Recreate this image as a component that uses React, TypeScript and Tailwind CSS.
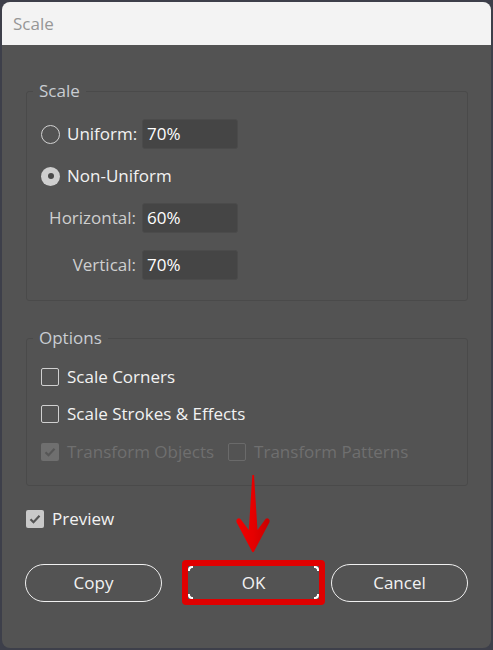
import React from 'react';

const font = { fontFamily: '"Open Sans", "Noto Sans", Arial, sans-serif' };

function Radio({ checked }: { checked?: boolean }) {
  if (checked) {
    return (
      <span className="flex h-[19px] w-[19px] shrink-0 items-center justify-center rounded-full bg-[#cfcfcf]">
        <span className="h-[6px] w-[6px] rounded-full bg-[#4a4a4a]" />
      </span>
    );
  }
  return <span className="h-[19px] w-[19px] shrink-0 rounded-full border-[1.5px] border-[#d2d2d2]" />;
}

function Check({ checked, disabled }: { checked?: boolean; disabled?: boolean }) {
  if (checked) {
    return (
      <span
        className={
          'flex h-[18px] w-[18px] shrink-0 items-center justify-center rounded-[2px] ' +
          (disabled ? 'bg-[#6f6f6f]' : 'bg-[#c9c9c9]')
        }
      >
        <svg width="12" height="10" viewBox="0 0 12 10">
          <path
            d="M1.5 5.2 L4.5 8.2 L10.5 1.8"
            fill="none"
            stroke={disabled ? '#575757' : '#555555'}
            strokeWidth="2.2"
          />
        </svg>
      </span>
    );
  }
  return (
    <span
      className={
        'block h-[18px] w-[18px] shrink-0 rounded-[2px] border-[1.5px] ' +
        (disabled ? 'border-[#6a6a6a]' : 'border-[#d0d0d0]')
      }
    />
  );
}

function Field({ value }: { value: string }) {
  return (
    <div className="flex h-[30px] w-[96px] items-center rounded-[3px] border border-[#4b4b4b] bg-[#454545] px-[4px] text-[17px] text-white">
      {value}
    </div>
  );
}

export default function App() {
  return (
    <div className="h-[650px] w-[493px] bg-[#3d3f4a] p-[2px]" style={font}>
      <div className="relative flex h-[646px] flex-col overflow-hidden rounded-[8px] bg-[#535353]">
        <div className="flex h-[43px] shrink-0 items-center bg-[#f3f3f3] px-[11px] text-[17px] text-[#969696]">
          Scale
        </div>

        <div className="flex flex-col px-[24px] pr-[23px] pt-[35px]">
          <fieldset className="rounded-[3px] border border-[#4a4a4a] px-[14px] pb-[20px]">
            <legend className="ml-[-8px] px-[6px] text-[17px] leading-[22px] text-[#c9cdd2]">Scale</legend>
            <div className="mt-[17px] flex items-center gap-[6px]">
              <div className="flex w-[95px] items-center gap-[7px]">
                <Radio />
                <span className="text-[17px] text-[#f2f2f2]">Uniform:</span>
              </div>
              <Field value="70%" />
            </div>
            <div className="mt-[12px] flex h-[30px] items-center gap-[7px]">
              <Radio checked />
              <span className="text-[17px] text-[#f2f2f2]">Non-Uniform</span>
            </div>
            <div className="mt-[12px] flex items-center gap-[6px]">
              <span className="w-[95px] text-right text-[17px] text-[#cfcfcf]">Horizontal:</span>
              <Field value="60%" />
            </div>
            <div className="mt-[17px] flex items-center gap-[6px]">
              <span className="w-[95px] text-right text-[17px] text-[#cfcfcf]">Vertical:</span>
              <Field value="70%" />
            </div>
          </fieldset>

          <fieldset className="mt-[26px] rounded-[3px] border border-[#4a4a4a] px-[14px] pb-[22px]">
            <legend className="ml-[-8px] px-[6px] text-[17px] leading-[22px] text-[#c9cdd2]">Options</legend>
            <div className="mt-[17px] flex h-[22px] items-center gap-[8px]">
              <Check />
              <span className="text-[17px] text-[#f2f2f2]">Scale Corners</span>
            </div>
            <div className="mt-[15px] flex h-[22px] items-center gap-[8px]">
              <Check />
              <span className="text-[17px] text-[#f2f2f2]">Scale Strokes &amp; Effects</span>
            </div>
            <div className="mt-[16px] flex h-[22px] items-center">
              <Check checked disabled />
              <span className="ml-[8px] text-[17px] text-[#6f6f6f]">Transform Objects</span>
              <span className="ml-[14px] flex">
                <Check disabled />
              </span>
              <span className="ml-[8px] text-[17px] text-[#6f6f6f]">Transform Patterns</span>
            </div>
          </fieldset>

          <div className="mt-[22px] flex h-[22px] items-center gap-[8px]">
            <Check checked />
            <span className="text-[17px] text-[#f2f2f2]">Preview</span>
          </div>

          <div className="mt-[30px] flex items-center">
            <button className="ml-[-1px] h-[38px] w-[137px] rounded-full border-[1.5px] border-[#f0f0f0] text-[17px] text-[#f2f2f2]">
              Copy
            </button>
            <div className="relative ml-[20px] h-[45px] w-[143px] rounded-[4px] border-[6px] border-[#e00000]">
              <span className="absolute left-0 top-0 h-[5px] w-[5px] rounded-tl-[4px] border-l-2 border-t-2 border-white" />
              <span className="absolute right-0 top-0 h-[5px] w-[5px] rounded-tr-[4px] border-r-2 border-t-2 border-white" />
              <span className="absolute bottom-0 left-0 h-[5px] w-[5px] rounded-bl-[4px] border-b-2 border-l-2 border-white" />
              <span className="absolute bottom-0 right-0 h-[5px] w-[5px] rounded-br-[4px] border-b-2 border-r-2 border-white" />
              <div className="flex h-full items-center justify-center text-[17px] text-[#f2f2f2]">OK</div>
            </div>
            <button className="ml-[6px] h-[38px] w-[137px] rounded-full border-[1.5px] border-[#f0f0f0] text-[17px] text-[#f2f2f2]">
              Cancel
            </button>
          </div>
        </div>

        <svg className="absolute left-0 top-0" width="493" height="650" viewBox="2 2 493 650" style={{ pointerEvents: 'none' }}>
          <defs>
            <linearGradient id="ar" x1="0" x2="1" y1="0" y2="0">
              <stop offset="0" stopColor="#f00000" />
              <stop offset="0.5" stopColor="#e60000" />
              <stop offset="1" stopColor="#c80000" />
            </linearGradient>
          </defs>
          <path
            d="M252.3 475 L254 475 L257.5 530 L265.5 519 Q268 517 269.5 520 Q270 522 268.5 524 L254 551.5 Q253 553 252 551.5 L237.5 524 Q236 522 236.5 520 Q238 517 240.5 519 L248.8 530 Z"
            fill="url(#ar)"
          />
        </svg>
      </div>
    </div>
  );
}
